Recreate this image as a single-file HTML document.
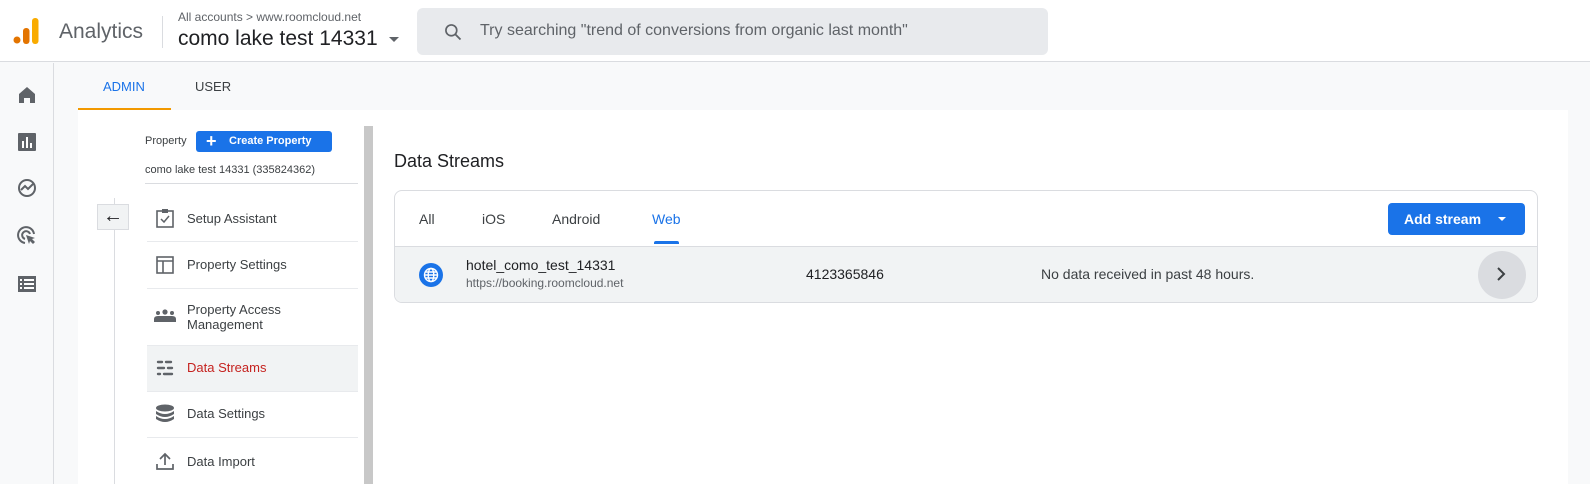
<!DOCTYPE html>
<html><head><meta charset="utf-8"><style>
*{box-sizing:border-box;margin:0;padding:0}
body{width:1590px;height:484px;overflow:hidden;background:#f8f9fa;font-family:"Liberation Sans",Arial,sans-serif;color:#202124;position:relative}
.abs{position:absolute}
.header{left:0;top:0;width:1590px;height:62px;background:#fff;border-bottom:1px solid #dadce0}
.nav{left:0;top:63px;width:54px;height:421px;border-right:1px solid #dadce0;background:#f8f9fa}
.panel{left:78px;top:110px;width:1490px;height:374px;background:#fff}
.item{position:absolute;left:147px;width:211px;border-bottom:1px solid #e8eaed;font-size:13px;color:#3c4043}
.item span{position:absolute;left:40px}
</style></head><body>
<div class="abs header">
 <svg class="abs" style="left:13px;top:17px" width="26" height="28"><circle cx="4" cy="23" r="3.5" fill="#e37400"/><rect x="10" y="11" width="6.5" height="16" rx="3" fill="#e37400"/><rect x="19" y="1" width="6.5" height="26" rx="3" fill="#f9ab00"/></svg>
 <div class="abs" style="left:59px;top:20px;font-size:21px;color:#5f6368">Analytics</div>
 <div class="abs" style="left:162px;top:16px;width:1px;height:32px;background:#dadce0"></div>
 <div class="abs" style="left:178px;top:10px;font-size:12px;color:#5f6368">All accounts &gt; www.roomcloud.net</div>
 <div class="abs" style="left:178px;top:27px;font-size:21px;color:#202124">como lake test 14331</div>
 <div class="abs" style="left:389px;top:37px;border-left:5px solid transparent;border-right:5px solid transparent;border-top:5px solid #5f6368"></div>
 <div class="abs" style="left:417px;top:8px;width:631px;height:47px;background:#e8eaed;border-radius:6px"></div>
 <svg class="abs" style="left:443px;top:22px" width="20" height="20" viewBox="0 0 24 24"><circle cx="10" cy="10" r="6.5" fill="none" stroke="#5f6368" stroke-width="2"/><path d="M15 15l6 6" stroke="#5f6368" stroke-width="2.2"/></svg>
 <div class="abs" style="left:480px;top:22px;font-size:16px;color:#5f6368">Try searching "trend of conversions from organic last month"</div>
</div>
<div class="abs nav">
 <svg class="abs" style="left:17px;top:22px" width="20" height="20" viewBox="0 0 20 20"><path d="M2 9L10 2l8 7v9h-5v-5H7v5H2z" fill="#5f6368"/></svg>
 <svg class="abs" style="left:18px;top:70px" width="18" height="18"><rect width="18" height="18" rx="1" fill="#5f6368"/><rect x="4" y="8" width="2" height="7" fill="#fff"/><rect x="8" y="4" width="2" height="11" fill="#fff"/><rect x="12" y="10" width="2" height="5" fill="#fff"/></svg>
 <svg class="abs" style="left:17px;top:115px" width="20" height="20" viewBox="0 0 20 20"><circle cx="10" cy="10" r="8" fill="none" stroke="#5f6368" stroke-width="2"/><path d="M4 12l4-4 3 3 5-5" fill="none" stroke="#5f6368" stroke-width="2"/></svg>
 <svg class="abs" style="left:17px;top:163px" width="20" height="20" viewBox="0 0 20 20"><path d="M17 8A8 8 0 1 0 8 17" fill="none" stroke="#5f6368" stroke-width="2"/><path d="M13 8A4 4 0 1 0 8 13" fill="none" stroke="#5f6368" stroke-width="2"/><path d="M9 9l9 3-3 1 3 3-2 2-3-3-1 3z" fill="#5f6368"/></svg>
 <svg class="abs" style="left:18px;top:213px" width="18" height="16"><rect width="18" height="16" fill="#5f6368"/><rect x="2" y="3" width="2" height="2" fill="#fff"/><rect x="6" y="3" width="10" height="2" fill="#fff"/><rect x="2" y="7" width="2" height="2" fill="#fff"/><rect x="6" y="7" width="10" height="2" fill="#fff"/><rect x="2" y="11" width="2" height="2" fill="#fff"/><rect x="6" y="11" width="10" height="2" fill="#fff"/></svg>
</div>
<div class="abs" style="left:103px;top:79px;font-size:13px;color:#1a73e8">ADMIN</div>
<div class="abs" style="left:78px;top:108px;width:93px;height:2px;background:#f29900"></div>
<div class="abs" style="left:195px;top:79px;font-size:13px;color:#3c4043">USER</div>
<div class="abs panel"></div>
<div class="abs" style="left:145px;top:135px;font-size:11px;color:#3c4043">Property</div>
<div class="abs" style="left:196px;top:131px;width:136px;height:21px;background:#1a73e8;border-radius:3px;color:#fff;font-size:11px;font-weight:bold;line-height:21px;padding-left:33px">Create Property</div>
<div class="abs" style="left:206px;top:134px;color:#fff;font-size:18px;line-height:14px;font-weight:bold">+</div>
<div class="abs" style="left:145px;top:164px;font-size:11px;color:#3c4043">como lake test 14331 (335824362)</div>
<div class="abs" style="left:145px;top:183px;width:213px;height:1px;background:#dadce0"></div>
<div class="abs" style="left:114px;top:198px;width:1px;height:286px;background:#dadce0"></div>
<div class="abs" style="left:97px;top:204px;width:32px;height:26px;background:#f1f3f4;border:1px solid #dadce0;font-size:20px;line-height:22px;text-align:center;color:#202124">&#8592;</div>
<div class="item" style="top:196px;height:46px"><svg class="abs" style="left:9px;top:12px" width="18" height="20"><rect x="1" y="3" width="16" height="16" fill="none" stroke="#5f6368" stroke-width="1.6"/><rect x="6" y="1" width="6" height="4" fill="#5f6368"/><path d="M5 11l3 3 5-6" fill="none" stroke="#5f6368" stroke-width="1.5"/></svg><span style="top:15px">Setup Assistant</span></div>
<div class="item" style="top:242px;height:47px"><svg class="abs" style="left:9px;top:14px" width="18" height="18"><rect x="1" y="1" width="16" height="16" fill="none" stroke="#5f6368" stroke-width="1.6"/><path d="M1 5h16M7 5v12" stroke="#5f6368" stroke-width="1.6"/></svg><span style="top:15px">Property Settings</span></div>
<div class="item" style="top:289px;height:57px"><svg class="abs" style="left:7px;top:20px" width="22" height="14"><circle cx="4" cy="4" r="2" fill="#5f6368"/><circle cx="11" cy="3" r="2.6" fill="#5f6368"/><circle cx="18" cy="4" r="2" fill="#5f6368"/><path d="M0 13v-3q0-3 4-3h14q4 0 4 3v3z" fill="#5f6368"/></svg><span style="top:13px;line-height:15px">Property Access<br>Management</span></div>
<div class="item" style="top:346px;height:46px;background:#f1f3f4"><svg class="abs" style="left:9px;top:13px" width="18" height="20"><g stroke="#5f6368" stroke-width="2.4" stroke-linecap="round"><path d="M2 3h4M10 3h5M2 9h6M12 9h4M2 15h2M8 15h8"/></g></svg><span style="top:14px;color:#c5221f">Data Streams</span></div>
<div class="item" style="top:392px;height:46px"><svg class="abs" style="left:8px;top:12px" width="20" height="20"><ellipse cx="10" cy="4" rx="9" ry="3.5" fill="#5f6368"/><path d="M1 7q9 6 18 0v3q-9 6-18 0zM1 12q9 6 18 0v3q-9 6-18 0z" fill="#5f6368"/></svg><span style="top:14px">Data Settings</span></div>
<div class="item" style="top:438px;height:46px;border:none"><svg class="abs" style="left:9px;top:14px" width="18" height="18"><path d="M9 13V2M4 7l5-5 5 5M1 12v5h16v-5" fill="none" stroke="#5f6368" stroke-width="1.7"/></svg><span style="top:16px">Data Import</span></div>
<div class="abs" style="left:364px;top:126px;width:9px;height:358px;background:#c8c8c8"></div>
<div class="abs" style="left:394px;top:151px;font-size:18px;color:#202124">Data Streams</div>
<div class="abs" style="left:394px;top:190px;width:1144px;height:113px;border:1px solid #dadce0;border-radius:8px;background:#fff;overflow:hidden">
 <div class="abs" style="left:24px;top:20px;font-size:14px;color:#3c4043">All</div>
 <div class="abs" style="left:87px;top:20px;font-size:14px;color:#3c4043">iOS</div>
 <div class="abs" style="left:157px;top:20px;font-size:14px;color:#3c4043">Android</div>
 <div class="abs" style="left:257px;top:20px;font-size:14px;color:#1a73e8">Web</div>
 <div class="abs" style="left:259px;top:50px;width:25px;height:3px;background:#1a73e8;border-radius:2px 2px 0 0"></div>
 <div class="abs" style="left:993px;top:12px;width:137px;height:32px;background:#1a73e8;border-radius:4px;color:#fff;font-size:14px;font-weight:bold;line-height:32px;padding-left:16px">Add stream</div>
 <div class="abs" style="left:1103px;top:26px;border-left:4px solid transparent;border-right:4px solid transparent;border-top:4px solid #fff"></div>
 <div class="abs" style="left:0;top:55px;width:1144px;height:58px;background:#f1f3f4;border-top:1px solid #dadce0"></div>
 <svg class="abs" style="left:24px;top:72px" width="24" height="24" viewBox="0 0 24 24"><circle cx="12" cy="12" r="12" fill="#1a73e8"/><g fill="none" stroke="#fff" stroke-width="1.4"><circle cx="12" cy="12" r="6.5"/><ellipse cx="12" cy="12" rx="2.8" ry="6.5"/><path d="M5.5 12h13M6.5 9h11M6.5 15h11"/></g></svg>
 <div class="abs" style="left:71px;top:66px;font-size:14px;color:#202124">hotel_como_test_14331</div>
 <div class="abs" style="left:71px;top:85px;font-size:12px;color:#5f6368">https://booking.roomcloud.net</div>
 <div class="abs" style="left:411px;top:75px;font-size:14px;color:#202124">4123365846</div>
 <div class="abs" style="left:646px;top:75px;font-size:14px;color:#3c4043">No data received in past 48 hours.</div>
 <div class="abs" style="left:1083px;top:60px;width:48px;height:48px;border-radius:50%;background:#dadce0"></div>
 <svg class="abs" style="left:1101px;top:76px" width="10" height="14"><path d="M2 1l6 6-6 6" fill="none" stroke="#3c4043" stroke-width="2"/></svg>
</div>
</body></html>
